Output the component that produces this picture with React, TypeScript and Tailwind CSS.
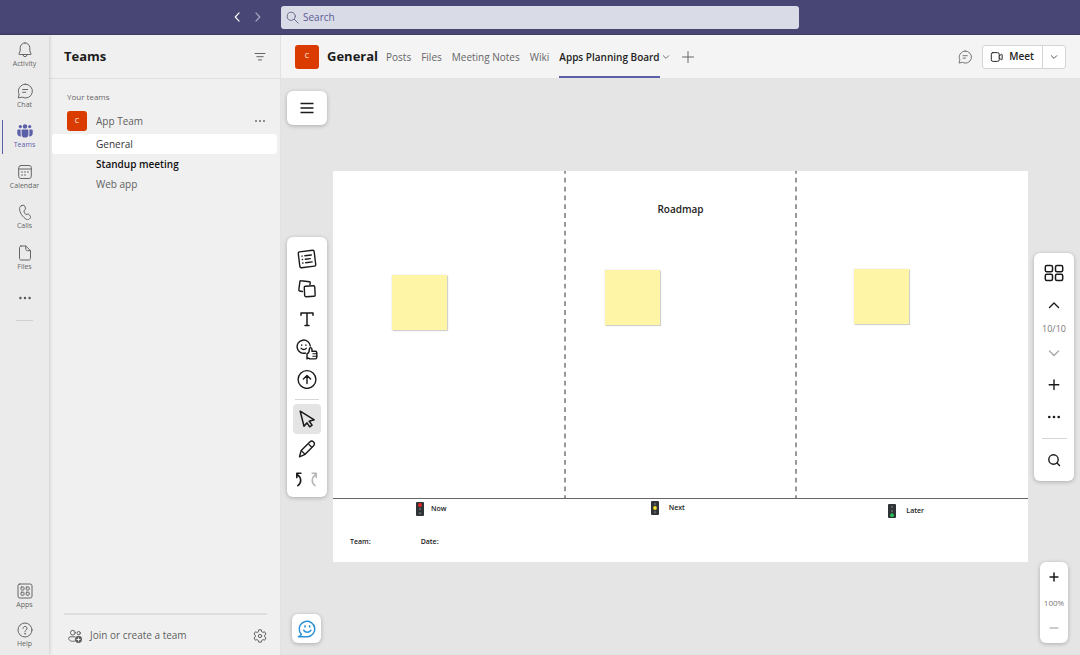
import React from "react";

type IconProps = { children: React.ReactNode; className?: string; box?: number; stroke?: number };

function Icon({ children, className = "size-4", box = 16, stroke = 1 }: IconProps) {
  return (
    <svg
      className={className}
      viewBox={`0 0 ${box} ${box}`}
      fill="none"
      stroke="currentColor"
      strokeWidth={stroke}
      strokeLinecap="round"
      strokeLinejoin="round"
      aria-hidden="true"
    >
      {children}
    </svg>
  );
}

const ChatShape = () => (
  <>
    <path d="M8.3 1.2a6.9 6.9 0 1 1-3.2 12.9l-3.9.8.9-3.7A6.9 6.9 0 0 1 8.300 1.200Z" />
    <path d="M5.700 6.500h5M5.700 9.300h3" />
  </>
);

const BellIcon = () => (
  <Icon>
    <path d="M8 .9a4.800 4.800 0 0 0-4.800 4.800v3.200L1.900 12c-.1.300 0 .500.400.500h11.400c.4 0 .5-.2.400-.5l-1.300-3.100V5.700A4.800 4.800 0 0 0 8 .9Z" />
    <path d="M6 12.700a2 2 0 0 0 4 0" />
  </Icon>
);
const ChatIcon = () => (
  <Icon>
    <ChatShape />
  </Icon>
);
const TeamsIcon = () => (
  <Icon>
    <g fill="currentColor" stroke="none">
      <circle cx="8" cy="3.400" r="2.200" />
      <circle cx="3.300" cy="3.600" r="1.600" />
      <circle cx="12.700" cy="3.600" r="1.600" />
      <path d="M5.600 6.400h4.800c.6 0 1 .4 1 1v3.800a3.400 3.400 0 0 1-6.800 0V7.400c0-.6.400-1 1-1Z" />
      <path d="M1.200 6.400h2.700c-.2.3-.3.700-.3 1v3.800c0 .8.2 1.500.5 2.100A3 3 0 0 1 .3 10.400V7.300c0-.5.4-.9.900-.9ZM14.800 6.400h-2.700c.2.3.3.7.3 1v3.800c0 .8-.2 1.500-.5 2.100a3 3 0 0 0 3.800-2.900V7.300c0-.5-.4-.9-.9-.9Z" />
    </g>
  </Icon>
);
const CalendarIcon = () => (
  <Icon>
    <rect x="1.700" y="1.500" width="12.600" height="13" rx="2.200" />
    <path d="M1.700 5h12.600" />
    <g fill="currentColor" stroke="none">
      <circle cx="8" cy="8" r=".8" />
      <circle cx="11" cy="8" r=".8" />
      <circle cx="5" cy="11" r=".8" />
      <circle cx="8" cy="11" r=".8" />
      <circle cx="5" cy="8" r=".8" />
    </g>
  </Icon>
);
const PhoneIcon = () => (
  <Icon>
    <path d="M4.600 1.600 6 1.200c.7-.2 1.300.1 1.600.8l.9 2.100c.2.6.1 1.200-.4 1.600L6.800 6.900c.3 1.400 1 2.600 2.100 3.700l1.700-.5c.6-.2 1.100 0 1.500.5l1.300 1.800c.4.6.3 1.300-.2 1.800l-.9.9c-.7.6-1.600.8-2.500.4C5.500 13.300 2.600 8.500 2.500 4.400c0-1.300.8-2.400 2.100-2.800Z" />
  </Icon>
);
const FileIcon = () => (
  <Icon>
    <path d="M4 1h4.800l4.700 4.700V13.500c0 .8-.7 1.500-1.500 1.500H4c-.8 0-1.500-.7-1.500-1.500v-11C2.500 1.700 3.200 1 4 1Z" />
    <path d="M8.800 1v3.200c0 .8.7 1.500 1.500 1.500h3.200" />
  </Icon>
);
const DotsIcon = ({ r = 1.2, gap = 4.6, className }: { r?: number; gap?: number; className?: string }) => (
  <Icon className={className}>
    <g fill="currentColor" stroke="none">
      <circle cx={8 - gap} cy="8" r={r} />
      <circle cx="8" cy="8" r={r} />
      <circle cx={8 + gap} cy="8" r={r} />
    </g>
  </Icon>
);
const AppsIcon = () => (
  <Icon>
    <rect x="1" y="1" width="14" height="14" rx="1.800" />
    <rect x="4" y="4" width="3" height="3" rx=".6" />
    <rect x="9.200" y="4" width="3" height="3" rx=".6" />
    <rect x="4" y="9.200" width="3" height="3" rx=".6" />
    <rect x="9.200" y="9.200" width="3" height="3" rx=".6" />
  </Icon>
);
const HelpIcon = () => (
  <Icon>
    <circle cx="8" cy="8" r="7" />
    <path d="M6 6.400a2 2 0 1 1 3.300 1.500C8.500 8.500 8 8.900 8 9.800" />
    <circle cx="8" cy="11.800" r=".3" />
  </Icon>
);
const Chevron = ({ d, className = "size-3", stroke = 1 }: { d: string; className?: string; stroke?: number }) => (
  <Icon box={12} className={className} stroke={stroke}>
    <path d={d} />
  </Icon>
);
const DOWN = "M3.300 4.700 6 7.400 8.700 4.700";

const GEAR = (() => {
  const pts: string[] = [];
  for (let i = 0; i < 6; i++) {
    const a = (i * 60 * Math.PI) / 180;
    const at = (r: number, off: number) => {
      const t = a + (off * Math.PI) / 180;
      return `${(8 + r * Math.sin(t)).toFixed(2)} ${(8 - r * Math.cos(t)).toFixed(2)}`;
    };
    pts.push(at(5.4, -20), at(7.2, -12), at(7.2, 12), at(5.4, 20));
  }
  return `M${pts.join("L")}Z`;
})();

const tool = "flex h-[30px] w-7 items-center justify-center rounded";
const card = "rounded-md bg-white shadow-[0_1px_4px_rgba(0,0,0,0.25)]";

function RailButton({ label, icon, active = false }: { label: string; icon: React.ReactNode; active?: boolean }) {
  return (
    <button
      className={
        active
          ? "relative flex w-full flex-col items-center justify-center text-[#5b5fa8]"
          : "relative flex w-full flex-col items-center justify-center text-[#666]"
      }
    >
      {active && <span className="absolute left-0.5 h-[34px] w-px bg-[#5b5fa8]" />}
      {icon}
      <span className="text-[7px] leading-3">{label}</span>
    </button>
  );
}

function Rail() {
  return (
    <nav aria-label="Apps" className="z-10 flex w-[49px] shrink-0 flex-col bg-[#ebebeb] shadow-[0_0_4px_rgba(0,0,0,0.22)]">
      <div className="mt-px grid h-[243px] grid-rows-6">
        <RailButton label="Activity" icon={<BellIcon />} />
        <RailButton label="Chat" icon={<ChatIcon />} />
        <RailButton label="Teams" icon={<TeamsIcon />} active />
        <RailButton label="Calendar" icon={<CalendarIcon />} />
        <RailButton label="Calls" icon={<PhoneIcon />} />
        <RailButton label="Files" icon={<FileIcon />} />
      </div>
      <button aria-label="More apps" className="mt-[11px] flex justify-center text-[#555]">
        <DotsIcon />
      </button>
      <hr className="mx-4 mt-3.5 border-[#d0d0d0]" />
      <div className="mt-auto grid h-[78px] grid-rows-2">
        <RailButton label="Apps" icon={<AppsIcon />} />
        <RailButton label="Help" icon={<HelpIcon />} />
      </div>
    </nav>
  );
}

function TeamsPanel() {
  return (
    <aside className="flex w-[232px] shrink-0 flex-col border-r border-[#e2e2e2] bg-[#f0f0f0]">
      <header className="flex h-11 items-center justify-between border-b border-[#dfdfdf] pt-px pr-3 pl-[15px]">
        <h1 className="text-[13px] font-bold text-[#1c1c1c]">Teams</h1>
        <button aria-label="Filter" className="text-[#666]">
          <Icon>
            <path d="M3 4.500h10M4.800 7.700h6.400M6.400 10.900h3.200" />
          </Icon>
        </button>
      </header>
      <h2 className="mt-3 pl-[18px] text-[8px] leading-3 text-[#666]">Your teams</h2>
      <div className="mt-2 flex items-center pr-3 pl-[18px] text-[#5f5f5f]">
        <span className="flex size-5 items-center justify-center rounded-[3px] bg-[#da3b01] text-[7px] text-white">C</span>
        <span className="ml-[9px] flex-1 text-[10px]">App Team</span>
        <button aria-label="Team options">
          <DotsIcon r={0.9} gap={4} />
        </button>
      </div>
      <ul className="mt-[3px] pr-[3px] pl-[3px] text-[10px] leading-5">
        <li>
          <a href="#general" className="block rounded-[3px] bg-white pl-11 text-[#333]">General</a>
        </li>
        <li>
          <a href="#standup" className="block pl-11 font-semibold text-[#111]">Standup meeting</a>
        </li>
        <li>
          <a href="#webapp" className="block pl-11 text-[#5f5f5f]">Web app</a>
        </li>
      </ul>
      <footer className="mt-auto mr-[13px] ml-[15px] flex h-[42px] items-center justify-between border-t-2 border-[#dedede] pt-px text-[#5f5f5f]">
        <button className="flex items-center gap-2 pl-1 text-[10px]">
          <Icon className="size-[14px]" stroke={1.1}>
            <circle cx="5.500" cy="4.200" r="2.700" />
            <circle cx="12.200" cy="4.700" r="1.900" />
            <path d="M7.500 13.800c-3.800 1-6.700-.6-6.700-3.200 0-1 .6-1.700 1.600-1.700H8M12 8.700h1.500c.7 0 1.200.3 1.500.8" />
            <circle cx="12" cy="12" r="3.600" fill="currentColor" />
            <path d="M12 10.200v3.600M10.200 12h3.600" stroke="#f0f0f0" />
          </Icon>
          Join or create a team
        </button>
        <button aria-label="Manage teams">
          <Icon className="size-[14px]" stroke={1.1}>
            <path d={GEAR} />
            <circle cx="8" cy="8" r="1.900" />
          </Icon>
        </button>
      </footer>
    </aside>
  );
}

function ChannelHeader() {
  return (
    <header className="flex h-11 shrink-0 items-center border-b border-[#e4e4e4] bg-[#f4f4f4] pr-[14px] pl-[14px]">
      <span className="flex size-6 items-center justify-center rounded-[3px] bg-[#da3b01] text-[7px] text-white">C</span>
      <h2 className="ml-2 text-[13px] font-bold text-[#1c1c1c]">General</h2>
      <nav aria-label="Channel tabs" className="ml-2 flex h-full items-stretch gap-2.5 text-[10px] whitespace-nowrap text-[#666]">
        <a href="#posts" className="flex items-center pt-0.5">Posts</a>
        <a href="#files" className="flex items-center pt-0.5">Files</a>
        <a href="#notes" className="flex items-center pt-0.5">Meeting Notes</a>
        <a href="#wiki" className="flex items-center pt-0.5">Wiki</a>
        <a href="#board" className="flex items-center border-y-2 border-t-transparent border-b-[#5b5fa8] pt-0.5 font-semibold text-[#222]">
          Apps Planning Board
        </a>
      </nav>
      <button aria-label="Tab options" className="text-[#666]">
        <Chevron d={DOWN} className="size-3" stroke={0.9} />
      </button>
      <button aria-label="Add a tab" className="ml-2 text-[#666]">
        <Icon>
          <path d="M8 2.500v11M2.500 8h11" />
        </Icon>
      </button>
      <button aria-label="Show conversation" className="mr-2.5 ml-auto text-[#666]">
        <Icon className="size-[14px]">
          <ChatShape />
        </Icon>
      </button>
      <div className="flex h-6 rounded-[3px] border border-[#d4d4d4] bg-white">
        <button className="flex items-center gap-[5px] pr-2 pl-[7px] text-[10px] font-semibold text-[#222]">
          <Icon className="size-[14px]" stroke={1.1}>
            <rect x="1.500" y="3" width="9" height="10" rx="1.800" />
            <path d="M10.500 6.800 13 5c.5-.3.900-.1.900.4v5.200c0 .5-.4.700-.9.400l-2.500-1.800" />
          </Icon>
          Meet
        </button>
        <button aria-label="Meeting options" className="flex w-[23px] items-center justify-center border-l border-[#d4d4d4] text-[#555]">
          <Chevron d={DOWN} />
        </button>
      </div>
    </header>
  );
}

function TrafficLight({ lit }: { lit: "red" | "yellow" | "green" }) {
  return (
    <svg className="h-[14px] w-2" viewBox="0 0 8 14" aria-hidden="true">
      <rect width="8" height="14" rx="1" fill="#2f3336" />
      <circle cx="4" cy="3" r={lit === "red" ? 1.9 : 1.2} fill={lit === "red" ? "#e8251f" : "#5c5f62"} />
      <circle cx="4" cy="7" r={lit === "yellow" ? 1.9 : 1.2} fill={lit === "yellow" ? "#f4e12c" : "#5c5f62"} />
      <circle cx="4" cy="11.200" r={lit === "green" ? 1.900 : 1.2} fill={lit === "green" ? "#27c45a" : "#5c5f62"} />
    </svg>
  );
}

function Divider() {
  return (
    <svg className="absolute top-0 -right-px h-full w-0.5" aria-hidden="true">
      <line x1="1" y1="-2" x2="1" y2="100%" stroke="#777" strokeWidth="1.500" strokeDasharray="4.800 4.020" />
    </svg>
  );
}

const note = "absolute size-[55px] bg-[#fef6a6] shadow-[0_0_1px_rgba(0,0,0,0.25),1px_1px_1px_rgba(0,0,0,0.15)]";

function Board() {
  return (
    <section aria-label="Roadmap board" className="flex aspect-[695/391] w-full flex-col bg-white font-['Open_Sans',sans-serif] text-[#222]">
      <div className="grid flex-1 grid-cols-3 border-b border-[#666]">
        <div className="relative">
          <div className={`${note} top-[104px] left-[59px]`} />
          <Divider />
        </div>
        <div className="relative">
          <h3 className="mt-[31px] text-center text-[10px] leading-[14px] font-semibold">Roadmap</h3>
          <div className={`${note} top-[99px] left-10`} />
          <Divider />
        </div>
        <div className="relative">
          <div className={`${note} top-[98px] left-[58px]`} />
        </div>
      </div>
      <div className="grid h-[35px] grid-cols-3 text-[7px] leading-[14px] font-semibold">
        <div className="flex items-start gap-[7px] pt-[3px] pl-[83px]">
          <TrafficLight lit="red" />
          Now
        </div>
        <div className="flex items-start gap-[10px] pt-[2px] pl-[86px]">
          <TrafficLight lit="yellow" />
          Next
        </div>
        <div className="flex items-start gap-[10px] pt-[5px] pl-[92px]">
          <TrafficLight lit="green" />
          Later
        </div>
      </div>
      <div className="flex h-7 gap-[50px] pt-px pl-[17px] text-[7px] leading-[14px] font-semibold">
        <span>Team:</span>
        <span>Date:</span>
      </div>
    </section>
  );
}

function LeftTools() {
  return (
    <div role="toolbar" aria-label="Drawing tools" className={`flex w-10 flex-col items-center pt-[7px] pb-[3px] text-[#1a1a1a] ${card}`}>
      <button aria-label="Templates" className={tool}>
        <Icon box={20} className="size-5" stroke={1.4}>
          <g transform="rotate(-7 10 10)">
            <rect x="2" y="2" width="16" height="16" rx="1.500" />
            <path d="M8.300 6.500h6.500M8.300 10h5M8.300 13.500h6.500M5.300 6.500h.2M5.300 10h.2M5.300 13.500h.2" />
          </g>
        </Icon>
      </button>
      <button aria-label="Shapes" className={tool}>
        <Icon box={20} className="size-5" stroke={1.4}>
          <path d="M5.500 12.500 2.600 12c-.6-.1-.9-.5-.8-1.100L2.900 2.600c.1-.6.5-.9 1.100-.8l8.400 1c.6.100.9.500.8 1.100l-.2 1.600" />
          <rect x="7.500" y="7" width="10.500" height="10.500" rx="1.200" transform="rotate(-3 13 13)" />
        </Icon>
      </button>
      <button aria-label="Text" className={tool}>
        <Icon box={20} className="size-5" stroke={1.5}>
          <path d="M4 6.300V4h12v2.300M10 4v12.500M8 16.600h4" />
        </Icon>
      </button>
      <button aria-label="Reactions" className={tool}>
        <Icon box={20} className="size-[22px]" stroke={1.3}>
          <path d="M8.600 13.700A6 6 0 1 1 13 7.300" />
          <path d="M4.700 9.400a3 3 0 0 0 4.600 0M5.200 6.300v.3M9 6.300v.3" />
          <path d="M10 19v-4.500c1.900-1.200 2.200-2.800 2.200-4.600 0-1.500 2.300-1.500 2.300.3V12h3c.9 0 1.400.6 1.400 1.400v4c0 .9-.6 1.600-1.500 1.600H13c-1.200 0-1.700-1-3-1" />
          <path d="M15.300 14.300h3.500M15.300 16.600h3.500" strokeWidth="1" />
        </Icon>
      </button>
      <button aria-label="Upload" className={tool}>
        <Icon box={20} className="size-5" stroke={1.4}>
          <circle cx="10" cy="10.500" r="8.900" />
          <path d="M10 14.500V6.800M6.400 10 10 6.400l3.600 3.600" />
        </Icon>
      </button>
      <hr className="mt-[5px] mb-1 w-6 border-[#d6d6d6]" />
      <button aria-label="Select" aria-pressed="true" className={`${tool} bg-[#e4e4e4]`}>
        <Icon box={20} className="size-5" stroke={1.5}>
          <path d="m3.200 2.200 14 8.600-5 1.400 2.900 3.900-2.400 1.700-2.700-4-3 3.400-3.800-15Z" />
        </Icon>
      </button>
      <button aria-label="Pen" className={tool}>
        <Icon box={20} className="size-5" stroke={1.4}>
          <path d="M2.500 17.800 4.200 11.500l8.600-8.600c1.100-1.100 2.700-1.100 3.800 0s1.100 2.700 0 3.800l-8.500 8.600-5.600 2.500Z" />
          <path d="m12 5.500 2.500 2.500M4.600 11.900l3.100 3.100" strokeWidth="1.200" />
        </Icon>
      </button>
      <div className="flex h-[30px] items-center">
        <button aria-label="Undo">
          <Icon box={14} className="size-[15px]" stroke={1.500}>
            <path d="M5.500 12.800c3.600-2.800 3.500-7.300-.5-10.300M8.300 1.200H4.500v4" />
          </Icon>
        </button>
        <button aria-label="Redo" disabled className="text-[#b5b5b5]">
          <Icon box={14} className="size-[15px]" stroke={1.400}>
            <path d="M7.500 12.800c-3.600-2.800-3.500-7.300.5-10.300M4.800 1.200h3.800v4" />
          </Icon>
        </button>
      </div>
    </div>
  );
}

const nav = "flex h-8 w-full items-center justify-center";

function PageTools() {
  return (
    <div role="toolbar" aria-label="Page tools" className={`flex w-10 flex-col items-center pt-1 pb-[5px] text-[#1a1a1a] ${card}`}>
      <button aria-label="Page overview" className={nav}>
        <Icon box={20} className="size-5" stroke={1.5}>
          <rect x="1.300" y="2.500" width="7.200" height="6.200" rx="1.500" />
          <rect x="11.500" y="2.500" width="7.200" height="6.200" rx="1.500" />
          <rect x="1.300" y="11.300" width="7.200" height="6.200" rx="1.500" />
          <rect x="11.500" y="11.300" width="7.200" height="6.200" rx="1.500" />
        </Icon>
      </button>
      <button aria-label="Previous page" className={nav}>
        <Icon stroke={1.4}>
          <path d="m3.500 10.500 4.500-4.500 4.500 4.500" />
        </Icon>
      </button>
      <span className="text-[9px] leading-4 text-[#777]">10/10</span>
      <button aria-label="Next page" disabled className={`${nav} text-[#aaa]`}>
        <Icon stroke={1.4}>
          <path d="m3.500 6 4.500 4.500L12.500 6" />
        </Icon>
      </button>
      <button aria-label="Add page" className={nav}>
        <Icon stroke={1.4}>
          <path d="M8 3v9.500M3.200 7.700h9.600" />
        </Icon>
      </button>
      <button aria-label="More options" className={nav}>
        <DotsIcon r={1.3} gap={4.7} />
      </button>
      <hr className="my-[5px] w-[25px] border-[#d6d6d6]" />
      <button aria-label="Find on board" className={nav}>
        <Icon stroke={1.4}>
          <circle cx="7.500" cy="7.500" r="4.700" />
          <path d="m11 11 2.500 2.500" />
        </Icon>
      </button>
    </div>
  );
}

function Canvas() {
  return (
    <main className="relative flex flex-1 items-center bg-[#e5e5e5] px-[52px] pb-0.5">
      <Board />
      <div className="absolute inset-y-0 left-1.5 flex items-center">
        <LeftTools />
      </div>
      <button aria-label="Board menu" className={`absolute top-3 left-1.5 flex h-[34px] w-10 items-center justify-center text-[#1a1a1a] ${card}`}>
        <svg className="h-3 w-[14px]" viewBox="0 0 14 12" stroke="currentColor" strokeWidth="1.400" aria-hidden="true">
          <path d="M.5 1.500h13M.5 6h13M.5 10.500h13" />
        </svg>
      </button>
      <button aria-label="Send feedback" className={`absolute bottom-3 left-[11px] flex size-[29px] items-center justify-center text-[#2990d9] ${card}`}>
        <Icon box={20} className="size-5" stroke={1.500}>
          <path d="M1.500 17.800h9A7.800 7.800 0 1 0 2.600 12.500c.5 1.300 1 2.200 1.800 3-.5 1-1.500 1.700-2.900 2.300Z" />
          <path d="M6.700 11.300a4.400 4.400 0 0 0 7.200 0M8 6.800v1.300M12.600 6.800v1.300" />
        </Icon>
      </button>
      <div className="absolute inset-y-0 right-1.5 flex items-center">
        <PageTools />
      </div>
      <div className={`absolute right-3 bottom-3 flex w-7 flex-col items-center text-[#1a1a1a] ${card}`}>
        <button aria-label="Zoom in" className="flex h-[30px] items-center">
          <Icon className="size-[14px]" stroke={1.700}>
            <path d="M8 3.500v9M3.500 8h9" />
          </Icon>
        </button>
        <span className="text-[8px] leading-[21px] text-[#777]">100%</span>
        <button aria-label="Zoom out" className="flex h-[30px] items-center text-[#999]">
          <Icon className="size-[14px]" stroke={1.400}>
            <path d="M3.500 8h9" />
          </Icon>
        </button>
      </div>
    </main>
  );
}

export default function App() {
  return (
    <div className="flex min-h-screen flex-col font-['Open_Sans','Noto_Sans',sans-serif]">
      <div className="flex h-[35px] items-center border-b border-[#3f3d68] bg-[#484674]">
        <div className="flex w-[281px] shrink-0 items-center justify-end gap-[7px] pr-4 text-white">
          <button aria-label="Back">
            <Chevron d="M7.800 2.500 4.500 6l3.300 3.500" className="size-[14px]" />
          </button>
          <button aria-label="Forward" className="text-[#a9a8c8]">
            <Chevron d="M4.200 2.500 7.500 6 4.200 9.500" className="size-[14px]" />
          </button>
        </div>
        <label className="flex h-[23px] min-w-0 flex-1 items-center gap-1 rounded-[3px] bg-[#d9dbe6] pl-[5px]">
          <Icon className="size-[13px] text-[#6b6a8c]" stroke={1.200}>
            <circle cx="6.500" cy="6.500" r="5" />
            <path d="m10.300 10.300 4.700 4.700" />
          </Icon>
          <input
            type="search"
            aria-label="Search"
            placeholder="Search"
            className="min-w-0 flex-1 bg-transparent text-[10px] text-[#5b5a96] outline-none placeholder:text-[#5b5a96]"
          />
        </label>
        <div className="w-[281px] shrink-0" />
      </div>
      <div className="flex flex-1">
        <Rail />
        <TeamsPanel />
        <div className="flex min-w-0 flex-1 flex-col">
          <ChannelHeader />
          <Canvas />
        </div>
      </div>
    </div>
  );
}
